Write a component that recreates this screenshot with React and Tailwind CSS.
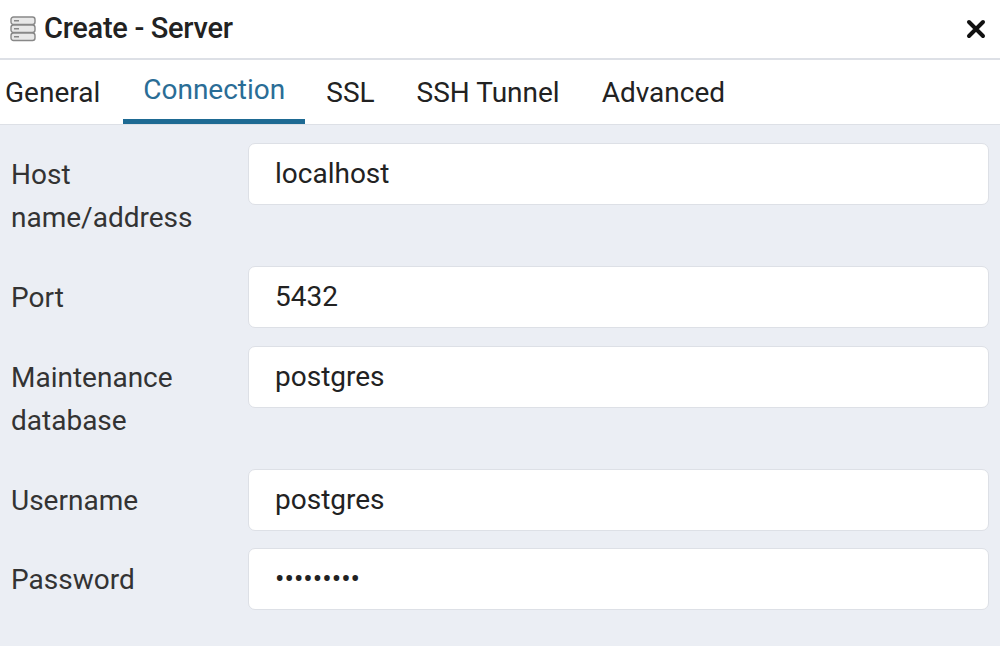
export default function App() {
  const rows = [
    { label: ["Host", "name/address"], value: "localhost", h: 123 },
    { label: ["Port"], value: "5432", h: 80 },
    { label: ["Maintenance", "database"], value: "postgres", h: 123 },
    { label: ["Username"], value: "postgres", h: 79 },
    { label: ["Password"], value: "•••••••••", h: 80 },
  ];
  return (
    <div className="w-[1000px] h-[646px] overflow-hidden bg-[#ebeef4] text-[#222]" style={{ fontFamily: "Roboto, sans-serif" }}>
      <div className="h-[60px] bg-white flex items-center justify-between pl-[10px] pr-[14px] border-b-2 border-[#dde0e6]">
        <div className="flex items-center gap-[8px]">
          <svg width="26" height="26" viewBox="0 0 26 26">
            {[1, 9, 17].map((y) => (
              <g key={y}>
                <rect x="1" y={y} width="24" height="7.5" rx="2.5" fill="#e8e8e8" stroke="#888" strokeWidth="1.4" />
                <rect x="4" y={y + 3} width="5" height="1.5" fill="#888" />
              </g>
            ))}
          </svg>
          <span className="text-[29px] font-medium tracking-[-0.3px] text-[#222]">Create - Server</span>
        </div>
        <svg width="20" height="20" viewBox="0 0 20 20"><path d="M3 3L17 17M17 3L3 17" stroke="#111" strokeWidth="4" strokeLinecap="round" /></svg>
      </div>
      <div className="h-[65px] bg-white flex items-end border-b border-[#dde0e6] text-[28px]">
        <div className="pl-[5px] pr-[23px] h-[65px] flex items-center pt-[2px]">General</div>
        <div className="px-[20px] h-[65px] flex items-center pt-[2px] text-[#2a6d96] border-b-[5px] border-[#1e6a93]">Connection</div>
        <div className="px-[21px] h-[65px] flex items-center pt-[2px]">SSL</div>
        <div className="px-[21px] h-[65px] flex items-center pt-[2px]">SSH Tunnel</div>
        <div className="px-[21px] h-[65px] flex items-center pt-[2px]">Advanced</div>
      </div>
      <div className="pt-[18px] flex flex-col">
        {rows.map((r) => (
          <div key={r.label[0]} className="flex" style={{ height: r.h }}>
            <div className="w-[248px] pl-[11px] pt-[10px] text-[28px] leading-[43px] text-[#333]">
              {r.label.map((l) => <div key={l}>{l}</div>)}
            </div>
            <div className="w-[741px] h-[62px] bg-white rounded-[7px] border border-[#dde0e6] flex items-center pl-[26px] text-[28px] text-[#222]">
              {r.value}
            </div>
          </div>
        ))}
      </div>
    </div>
  );
}
